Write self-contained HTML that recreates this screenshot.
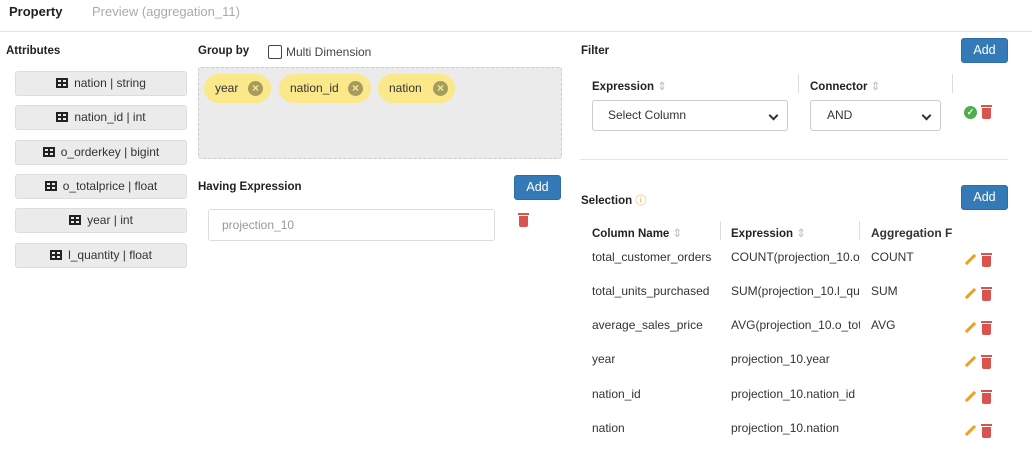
<!DOCTYPE html>
<html><head><style>
*{box-sizing:border-box;margin:0;padding:0}
body{width:1032px;height:457px;background:#fff;font-family:"Liberation Sans",sans-serif;color:#333;position:relative;overflow:hidden;font-size:12px}
.a{position:absolute;white-space:nowrap}
.b{font-weight:bold;font-size:11.5px;color:#222}
.attr{position:absolute;left:15px;width:172px;height:25px;background:#ebebeb;border:1px solid #ddd;border-radius:3px;text-align:center;line-height:23px;font-size:12px;color:#333}
.tb{display:inline-block;width:12px;height:10px;border:2px solid #222;vertical-align:-1px;margin-right:6px;background:linear-gradient(#222,#222) 50% 0/2px 100% no-repeat,linear-gradient(#222,#222) 0 50%/100% 2px no-repeat}
.chip{position:absolute;top:74px;height:29px;background:#fbe88a;border-radius:15px;line-height:29px;font-size:12px;color:#333;padding-left:11px}
.x{position:absolute;top:7px;width:15px;height:15px;border-radius:50%;background:#a39c5e;color:#fbe88a;font-size:12px;line-height:15px;text-align:center;font-weight:bold}
.btn{position:absolute;width:47px;height:25px;background:#337ab7;border:1px solid #2e6da4;border-radius:3px;color:#fff;text-align:center;line-height:23px;font-size:12.5px}
.sel{position:absolute;height:31px;border:1px solid #ccc;border-radius:3px;background:#fff;line-height:29px;font-size:12px;color:#333}
.chev{position:absolute;right:10px;top:11px;width:7px;height:7px;border-right:2px solid #333;border-bottom:2px solid #333;transform:rotate(45deg)}
.sep{position:absolute;width:1px;background:#ddd}
.tr{position:absolute;width:9px;height:11px;background:#d9534f;border-radius:0 0 2px 2px}
.tr:before{content:"";position:absolute;left:-1px;top:-3px;width:11px;height:2px;background:#d9534f}
.pen{position:absolute;width:3px;height:13px;background:#f0a020;transform:rotate(45deg)}
.cell{position:absolute;font-size:12px;color:#333;white-space:nowrap;overflow:hidden}
</style></head><body>
<div class="a" style="left:9px;top:4px;font-weight:bold;font-size:13px;color:#222">Property</div>
<div class="a" style="left:92px;top:4px;font-size:13px;color:#aaa">Preview (aggregation_11)</div>
<div class="a" style="left:0;top:31px;width:1032px;height:1px;background:#e3e3e3"></div>

<div class="a b" style="left:6px;top:45px">Attributes</div>
<div class="attr" style="top:71px"><span class="tb"></span>nation | string</div>
<div class="attr" style="top:105px"><span class="tb"></span>nation_id | int</div>
<div class="attr" style="top:140px"><span class="tb"></span>o_orderkey | bigint</div>
<div class="attr" style="top:174px"><span class="tb"></span>o_totalprice | float</div>
<div class="attr" style="top:208px"><span class="tb"></span>year | int</div>
<div class="attr" style="top:243px"><span class="tb"></span>l_quantity | float</div>

<div class="a b" style="left:198px;top:45px">Group by</div>
<div class="a" style="left:268px;top:45px;width:14px;height:14px;border:1.5px solid #444;border-radius:2px"></div>
<div class="a" style="left:286px;top:45px;font-size:12px;color:#444">Multi Dimension</div>
<div class="a" style="left:198px;top:67px;width:364px;height:92px;background:#ebebeb;border:1px dashed #ccc;border-radius:3px"></div>
<div class="chip" style="left:204px;width:67px">year<span class="x" style="left:44px">×</span></div>
<div class="chip" style="left:279px;width:92px">nation_id<span class="x" style="left:69px">×</span></div>
<div class="chip" style="left:378px;width:77px">nation<span class="x" style="left:55px">×</span></div>

<div class="a b" style="left:198px;top:181px">Having Expression</div>
<div class="btn" style="left:514px;top:175px">Add</div>
<div class="a" style="left:208px;top:209px;width:287px;height:32px;border:1px solid #ddd;border-radius:3px;padding-left:13px;line-height:30px;color:#999;font-size:12px">projection_10</div>
<div class="tr" style="left:519px;top:216px"></div>

<div class="a b" style="left:581px;top:45px">Filter</div>
<div class="btn" style="left:961px;top:38px">Add</div>
<div class="a b" style="left:592px;top:79px">Expression <span style="color:#bbb;font-weight:normal">⇕</span></div>
<div class="sep" style="left:798px;top:74px;height:19px"></div>
<div class="a b" style="left:810px;top:79px">Connector <span style="color:#bbb;font-weight:normal">⇕</span></div>
<div class="sep" style="left:952px;top:74px;height:19px"></div>
<div class="sel" style="left:592px;top:100px;width:196px;padding-left:15px">Select Column<span class="chev"></span></div>
<div class="sel" style="left:810px;top:100px;width:131px;padding-left:16px">AND<span class="chev"></span></div>
<div class="a" style="left:964px;top:106px;width:13px;height:13px;border-radius:50%;background:#4cae4c;color:#fff;font-size:9px;line-height:13px;text-align:center;font-weight:bold">✓</div>
<div class="tr" style="left:982px;top:108px"></div>
<div class="a" style="left:580px;top:159px;width:428px;height:1px;background:#e5e5e5"></div>

<div class="a b" style="left:581px;top:192px">Selection <span style="color:#f0a020;font-weight:normal;font-size:11px">ⓘ</span></div>
<div class="btn" style="left:961px;top:185px">Add</div>
<div class="a b" style="left:592px;top:226px">Column Name <span style="color:#bbb;font-weight:normal">⇕</span></div>
<div class="sep" style="left:720px;top:221px;height:19px"></div>
<div class="a b" style="left:731px;top:226px">Expression <span style="color:#bbb;font-weight:normal">⇕</span></div>
<div class="sep" style="left:859px;top:221px;height:19px"></div>
<div class="cell b" style="left:871px;top:226px;width:81px">Aggregation Fn</div>

<div class="cell" style="left:592px;top:250px">total_customer_orders</div><div class="cell" style="left:731px;top:250px;width:129px">COUNT(projection_10.o_orderkey)</div><div class="cell" style="left:871px;top:250px">COUNT</div>
<div class="cell" style="left:592px;top:284px">total_units_purchased</div><div class="cell" style="left:731px;top:284px;width:129px">SUM(projection_10.l_quantity)</div><div class="cell" style="left:871px;top:284px">SUM</div>
<div class="cell" style="left:592px;top:318px">average_sales_price</div><div class="cell" style="left:731px;top:318px;width:129px">AVG(projection_10.o_totalprice)</div><div class="cell" style="left:871px;top:318px">AVG</div>
<div class="cell" style="left:592px;top:352px">year</div><div class="cell" style="left:731px;top:352px">projection_10.year</div>
<div class="cell" style="left:592px;top:387px">nation_id</div><div class="cell" style="left:731px;top:387px">projection_10.nation_id</div>
<div class="cell" style="left:592px;top:421px">nation</div><div class="cell" style="left:731px;top:421px">projection_10.nation</div>

<div class="pen" style="left:969px;top:253px"></div><div class="tr" style="left:982px;top:256px"></div>
<div class="pen" style="left:969px;top:287px"></div><div class="tr" style="left:982px;top:290px"></div>
<div class="pen" style="left:969px;top:321px"></div><div class="tr" style="left:982px;top:324px"></div>
<div class="pen" style="left:969px;top:355px"></div><div class="tr" style="left:982px;top:358px"></div>
<div class="pen" style="left:969px;top:390px"></div><div class="tr" style="left:982px;top:393px"></div>
<div class="pen" style="left:969px;top:424px"></div><div class="tr" style="left:982px;top:427px"></div>
</body></html>
